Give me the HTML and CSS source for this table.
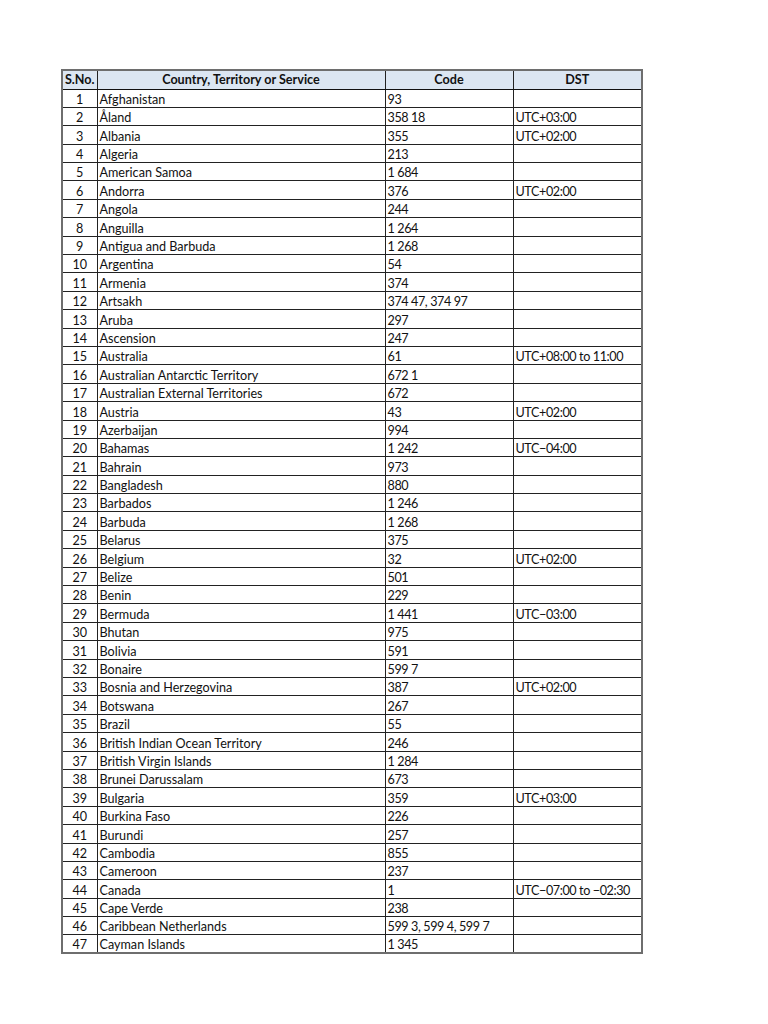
FILE: index.html
```html
<!DOCTYPE html>
<html>
<head>
<meta charset="utf-8">
<link rel="stylesheet" href="styles.css">
</head>
<body>
<div class="page">
<table class="codes">
<colgroup><col class="c-sno"><col class="c-name"><col class="c-code"><col class="c-dst"></colgroup>
<thead>
<tr><th>S.No.</th><th>Country, Territory or Service</th><th>Code</th><th>DST</th></tr>
</thead>
<tbody>
<tr><td>1</td><td>Afghanistan</td><td>93</td><td></td></tr>
<tr><td>2</td><td>Åland</td><td>358 18</td><td>UTC+03:00</td></tr>
<tr><td>3</td><td>Albania</td><td>355</td><td>UTC+02:00</td></tr>
<tr><td>4</td><td>Algeria</td><td>213</td><td></td></tr>
<tr><td>5</td><td>American Samoa</td><td>1 684</td><td></td></tr>
<tr><td>6</td><td>Andorra</td><td>376</td><td>UTC+02:00</td></tr>
<tr><td>7</td><td>Angola</td><td>244</td><td></td></tr>
<tr><td>8</td><td>Anguilla</td><td>1 264</td><td></td></tr>
<tr><td>9</td><td>Antigua and Barbuda</td><td>1 268</td><td></td></tr>
<tr><td>10</td><td>Argentina</td><td>54</td><td></td></tr>
<tr><td>11</td><td>Armenia</td><td>374</td><td></td></tr>
<tr><td>12</td><td>Artsakh</td><td>374 47, 374 97</td><td></td></tr>
<tr><td>13</td><td>Aruba</td><td>297</td><td></td></tr>
<tr><td>14</td><td>Ascension</td><td>247</td><td></td></tr>
<tr><td>15</td><td>Australia</td><td>61</td><td>UTC+08:00 to 11:00</td></tr>
<tr><td>16</td><td>Australian Antarctic Territory</td><td>672 1</td><td></td></tr>
<tr><td>17</td><td>Australian External Territories</td><td>672</td><td></td></tr>
<tr><td>18</td><td>Austria</td><td>43</td><td>UTC+02:00</td></tr>
<tr><td>19</td><td>Azerbaijan</td><td>994</td><td></td></tr>
<tr><td>20</td><td>Bahamas</td><td>1 242</td><td>UTC−04:00</td></tr>
<tr><td>21</td><td>Bahrain</td><td>973</td><td></td></tr>
<tr><td>22</td><td>Bangladesh</td><td>880</td><td></td></tr>
<tr><td>23</td><td>Barbados</td><td>1 246</td><td></td></tr>
<tr><td>24</td><td>Barbuda</td><td>1 268</td><td></td></tr>
<tr><td>25</td><td>Belarus</td><td>375</td><td></td></tr>
<tr><td>26</td><td>Belgium</td><td>32</td><td>UTC+02:00</td></tr>
<tr><td>27</td><td>Belize</td><td>501</td><td></td></tr>
<tr><td>28</td><td>Benin</td><td>229</td><td></td></tr>
<tr><td>29</td><td>Bermuda</td><td>1 441</td><td>UTC−03:00</td></tr>
<tr><td>30</td><td>Bhutan</td><td>975</td><td></td></tr>
<tr><td>31</td><td>Bolivia</td><td>591</td><td></td></tr>
<tr><td>32</td><td>Bonaire</td><td>599 7</td><td></td></tr>
<tr><td>33</td><td>Bosnia and Herzegovina</td><td>387</td><td>UTC+02:00</td></tr>
<tr><td>34</td><td>Botswana</td><td>267</td><td></td></tr>
<tr><td>35</td><td>Brazil</td><td>55</td><td></td></tr>
<tr><td>36</td><td>British Indian Ocean Territory</td><td>246</td><td></td></tr>
<tr><td>37</td><td>British Virgin Islands</td><td>1 284</td><td></td></tr>
<tr><td>38</td><td>Brunei Darussalam</td><td>673</td><td></td></tr>
<tr><td>39</td><td>Bulgaria</td><td>359</td><td>UTC+03:00</td></tr>
<tr><td>40</td><td>Burkina Faso</td><td>226</td><td></td></tr>
<tr><td>41</td><td>Burundi</td><td>257</td><td></td></tr>
<tr><td>42</td><td>Cambodia</td><td>855</td><td></td></tr>
<tr><td>43</td><td>Cameroon</td><td>237</td><td></td></tr>
<tr><td>44</td><td>Canada</td><td>1</td><td>UTC−07:00 to −02:30</td></tr>
<tr><td>45</td><td>Cape Verde</td><td>238</td><td></td></tr>
<tr><td>46</td><td>Caribbean Netherlands</td><td>599 3, 599 4, 599 7</td><td></td></tr>
<tr><td>47</td><td>Cayman Islands</td><td>1 345</td><td></td></tr>
</tbody>
</table>
</div>
</body>
</html>
```

FILE: styles.css
```css
html, body {
  margin: 0;
  padding: 0;
  background: #ffffff;
}
.page {
  padding: 69px 0 0 61px;
}
.codes {
  border-collapse: collapse;
  table-layout: fixed;
  width: 580px;
  font-family: Lato, "Liberation Sans", sans-serif;
  font-size: 12.6px;
  color: #111;
  border: 2px solid #6e6e6e;
}
.c-sno { width: 35px; }
.c-name { width: 288px; }
.c-code { width: 128px; }
.c-dst { width: 129px; }
.codes thead tr { height: 19px; }
.codes th {
  padding: 0;
  line-height: 15px;
  background: #dce6f2;
  font-weight: 700;
  text-align: center;
  border: 1px solid #222;
  border-top: 2px solid #6e6e6e;
  border-bottom: 1px solid #111;
}
.codes tbody tr { height: 18.4px; }
.codes td {
  padding: 0 0 0 2px;
  border: 1px solid #222;
  white-space: nowrap;
  overflow: hidden;
  vertical-align: bottom;
  line-height: 15px;
}
.codes td:first-child {
  text-align: center;
  padding: 0;
}
.codes td:nth-child(3),
.codes td:nth-child(4) {
  letter-spacing: -0.4px;
}
.codes th:first-child, .codes td:first-child { border-left: 2px solid #6e6e6e; }
.codes th:last-child, .codes td:last-child { border-right: 2px solid #6e6e6e; }
.codes tbody tr:last-child td { border-bottom: 2px solid #6e6e6e; }
```
